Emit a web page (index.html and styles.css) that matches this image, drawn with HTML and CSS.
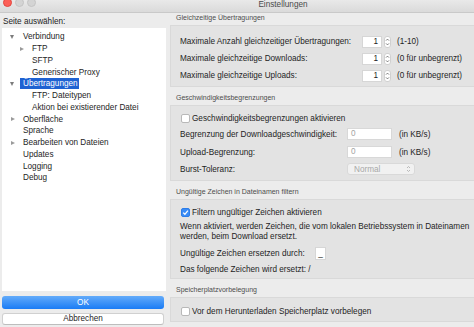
FILE: index.html
```html
<!DOCTYPE html>
<html>
<head>
<meta charset="UTF-8">
<title>Einstellungen</title>
<link rel="stylesheet" href="styles.css">
</head>
<body>
<div class="win">
	<div class="titlebar">
		<div class="lights"><span class="light red"></span><span class="light"></span><span class="light"></span></div>
		<div class="title">Einstellungen</div>
	</div>
	<div class="content">
		<!-- page tree -->
		<div class="side">
			<div class="side-label">Seite auswählen:</div>
			<div class="tree">
				<div class="node"><span class="tw"><i class="tri-d"></i></span>Verbindung</div>
				<div class="node l1"><span class="tw"><i class="tri-r"></i></span>FTP</div>
				<div class="node l1"><span class="tw"></span>SFTP</div>
				<div class="node l1"><span class="tw"></span>Generischer Proxy</div>
				<div class="node sel"><span class="tw"><i class="tri-d"></i></span><span class="hl">Übertragungen</span></div>
				<div class="node l1"><span class="tw"></span>FTP: Dateitypen</div>
				<div class="node l1"><span class="tw"></span>Aktion bei existierender Datei</div>
				<div class="node"><span class="tw"><i class="tri-r"></i></span>Oberfläche</div>
				<div class="node"><span class="tw"></span>Sprache</div>
				<div class="node"><span class="tw"><i class="tri-r"></i></span>Bearbeiten von Dateien</div>
				<div class="node"><span class="tw"></span>Updates</div>
				<div class="node"><span class="tw"></span>Logging</div>
				<div class="node"><span class="tw"></span>Debug</div>
			</div>
			<div class="btn ok">OK</div>
			<div class="btn cancel">Abbrechen</div>
		</div>

		<!-- settings page -->
		<div class="main">
			<div class="gt first">Gleichzeitige Übertragungen</div>
			<div class="grp g-1">
				<div class="grid1">
					<div>Maximale Anzahl gleichzeitiger Übertragungen:</div>
					<div class="spin"><span class="num">1</span><svg width="7" height="12" viewBox="0 0 7 12"><rect x="0.5" y="0.5" width="6" height="11" rx="2.5" fill="#fff" stroke="#d0d0d0"/><path d="M2 4.6 L3.5 3.1 L5 4.6 M2 7.4 L3.5 8.9 L5 7.4" fill="none" stroke="#5a5a5a" stroke-width="0.8"/></svg></div>
					<div class="note">(1-10)</div>
					<div>Maximale gleichzeitige Downloads:</div>
					<div class="spin"><span class="num">1</span><svg width="7" height="12" viewBox="0 0 7 12"><rect x="0.5" y="0.5" width="6" height="11" rx="2.5" fill="#fff" stroke="#d0d0d0"/><path d="M2 4.6 L3.5 3.1 L5 4.6 M2 7.4 L3.5 8.9 L5 7.4" fill="none" stroke="#5a5a5a" stroke-width="0.8"/></svg></div>
					<div class="note">(0 für unbegrenzt)</div>
					<div>Maximale gleichzeitige Uploads:</div>
					<div class="spin"><span class="num">1</span><svg width="7" height="12" viewBox="0 0 7 12"><rect x="0.5" y="0.5" width="6" height="11" rx="2.5" fill="#fff" stroke="#d0d0d0"/><path d="M2 4.6 L3.5 3.1 L5 4.6 M2 7.4 L3.5 8.9 L5 7.4" fill="none" stroke="#5a5a5a" stroke-width="0.8"/></svg></div>
					<div class="note">(0 für unbegrenzt)</div>
				</div>
			</div>

			<div class="gt">Geschwindigkeitsbegrenzungen</div>
			<div class="grp g-2">
				<div class="chk-row"><span class="chk"></span>Geschwindigkeitsbegrenzungen aktivieren</div>
				<div class="grid2">
					<div>Begrenzung der Downloadgeschwindigkeit:</div>
					<div class="field">0</div>
					<div class="note2">(in KB/s)</div>
					<div>Upload-Begrenzung:</div>
					<div class="field">0</div>
					<div class="note2">(in KB/s)</div>
					<div>Burst-Toleranz:</div>
					<div class="combo"><span>Normal</span><svg width="5" height="8" viewBox="0 0 5 8"><path d="M1 3 L2.5 1.5 L4 3 M1 5 L2.5 6.5 L4 5" fill="none" stroke="#ababab" stroke-width="0.8"/></svg></div>
				</div>
			</div>

			<div class="gt">Ungültige Zeichen in Dateinamen filtern</div>
			<div class="grp g-3">
				<div class="chk-row"><span class="chk on"><svg width="9" height="9" viewBox="0 0 9 9"><path d="M2.2 4.6 L3.9 6.3 L6.9 2.6" fill="none" stroke="#fff" stroke-width="1.3"/></svg></span>Filtern ungültiger Zeichen aktivieren</div>
				<div class="desc">Wenn aktiviert, werden Zeichen, die vom lokalen Betriebssystem in Dateinamen<br>werden, beim Download ersetzt.</div>
				<div class="repl"><span class="repl-l">Ungültige Zeichen ersetzen durch:</span><span class="char">_</span></div>
				<div class="line">Das folgende Zeichen wird ersetzt: /</div>
			</div>

			<div class="gt">Speicherplatzvorbelegung</div>
			<div class="grp g-4">
				<div class="chk-row"><span class="chk"></span>Vor dem Herunterladen Speicherplatz vorbelegen</div>
			</div>
		</div>
	</div>
</div>
</body>
</html>
```

FILE: styles.css
```css
body {
	margin: 0;
	width: 474px;
	height: 327px;
	overflow: hidden;
	background-color: #ececec;
	font-family: "Liberation Sans", Arial, sans-serif;
	font-size: 8.2px;
	color: #1e1e1e;
}
.win {
	width: 566px;
}

/* title bar */
.titlebar {
	display: grid;
	height: 12px;
	border-bottom: 1px solid #c9c9c9;
	background: linear-gradient(#e9e9e9, #dadada);
}
.lights, .title {
	grid-area: 1 / 1;
}
.lights {
	display: flex;
	gap: 3px;
	padding-left: 3px;
	margin-top: -2px;
}
.light {
	width: 7px;
	height: 7px;
	border-radius: 50%;
	background-color: #d4d4d4;
	border: 1px solid #c4c4c4;
}
.light.red {
	background-color: #fc5f57;
	border-color: #e2463f;
}
.title {
	text-align: center;
	line-height: 10px;
	color: #4a4a4a;
}

.content {
	display: flex;
}

/* left side */
.side {
	width: 164px;
	padding-left: 2px;
}
.side-label {
	padding: 4px 0 0 1px;
	line-height: 10px;
	height: 11px;
}
.tree {
	background-color: #ffffff;
	height: 260px;
	padding-top: 3px;
}
.node {
	display: flex;
	align-items: center;
	height: 11.75px;
	padding-left: 7px;
	white-space: nowrap;
}
.node.l1 {
	padding-left: 16px;
}
.tw {
	flex: none;
	width: 14px;
	display: flex;
	align-items: center;
}
.tri-d {
	border-left: 2.5px solid transparent;
	border-right: 2.5px solid transparent;
	border-top: 4px solid #7c7c7c;
	margin-left: 0.5px;
}
.tri-r {
	border-top: 2.5px solid transparent;
	border-bottom: 2.5px solid transparent;
	border-left: 4px solid #9a9a9a;
	margin-left: 2px;
}
.hl {
	background-color: #1f62d2;
	color: #ffffff;
	line-height: 11px;
	padding: 0 1px 0 3px;
	margin-left: -3px;
}
.btn {
	margin-right: 2px;
	text-align: center;
	border-radius: 3px;
}
.ok {
	margin-top: 5px;
	height: 13px;
	line-height: 13px;
	color: #ffffff;
	background: linear-gradient(#63abfa, #1b7cf5);
}
.cancel {
	margin-top: 4px;
	height: 10px;
	line-height: 10px;
	background-color: #ffffff;
	border: 1px solid #d0d0d0;
	border-bottom-color: #bdbdbd;
}

/* right side */
.main {
	flex: 1;
	margin-left: 4px;
}
.gt {
	font-size: 7px;
	color: #4d4d4d;
	line-height: 10px;
	padding: 6px 0 2px 6px;
}
.gt.first {
	padding-top: 0;
}
.grp {
	background-color: #e3e3e3;
	border: 1px solid #d9d9d9;
	border-right: none;
	padding-left: 9px;
}
.g-1 { padding-top: 7px; padding-bottom: 2px; }
.g-2 { padding-top: 5px; padding-bottom: 3px; }
.g-3 { padding-top: 5px; padding-bottom: 2px; }
.g-4 { padding-top: 6px; padding-bottom: 3px; }

.grid1 {
	display: grid;
	grid-template-columns: 182px 29px auto;
	grid-auto-rows: 17px;
	align-items: center;
	white-space: nowrap;
}
.spin {
	display: flex;
	gap: 2px;
}
.num {
	box-sizing: border-box;
	width: 20px;
	height: 12px;
	line-height: 10px;
	padding-right: 3px;
	text-align: right;
	background-color: #ffffff;
	border: 1px solid #d6d6d6;
}
.note {
	padding-left: 6px;
}

.chk-row {
	display: flex;
	align-items: center;
	height: 14px;
	white-space: nowrap;
}
.chk {
	box-sizing: border-box;
	width: 9px;
	height: 9px;
	margin: 0 2px 0 1px;
	background-color: #ffffff;
	border: 1px solid #b8b8b8;
	border-radius: 2px;
	display: flex;
}
.chk.on {
	background-color: #3a8cf6;
	border-color: #2d7de8;
}
.chk.on svg {
	margin: -1px;
}

.grid2 {
	display: grid;
	grid-template-columns: 167px 45px auto;
	grid-template-rows: 18px 18px 16px;
	align-items: center;
	white-space: nowrap;
}
.field {
	box-sizing: border-box;
	width: 45px;
	height: 12px;
	line-height: 10px;
	padding-left: 3px;
	color: #a3a3a3;
	background-color: #ffffff;
	border: 1px solid #d8d8d8;
}
.note2 {
	padding-left: 7px;
}
.combo {
	grid-column: 2 / span 2;
	box-sizing: border-box;
	width: 68px;
	height: 12px;
	padding: 0 3px 0 6px;
	display: flex;
	align-items: center;
	justify-content: space-between;
	color: #a8a8a8;
	background-color: #f1f1f1;
	border: 1px solid #d9d9d9;
	border-radius: 3px;
}

.desc {
	margin-top: 3px;
	line-height: 10px;
	white-space: nowrap;
}
.repl {
	display: flex;
	align-items: center;
	height: 22px;
}
.repl-l {
	width: 135px;
}
.char {
	box-sizing: border-box;
	width: 11px;
	height: 13px;
	line-height: 11px;
	text-align: center;
	background-color: #ffffff;
	border: 1px solid #d6d6d6;
}
.line {
	height: 12px;
	line-height: 12px;
}
```
